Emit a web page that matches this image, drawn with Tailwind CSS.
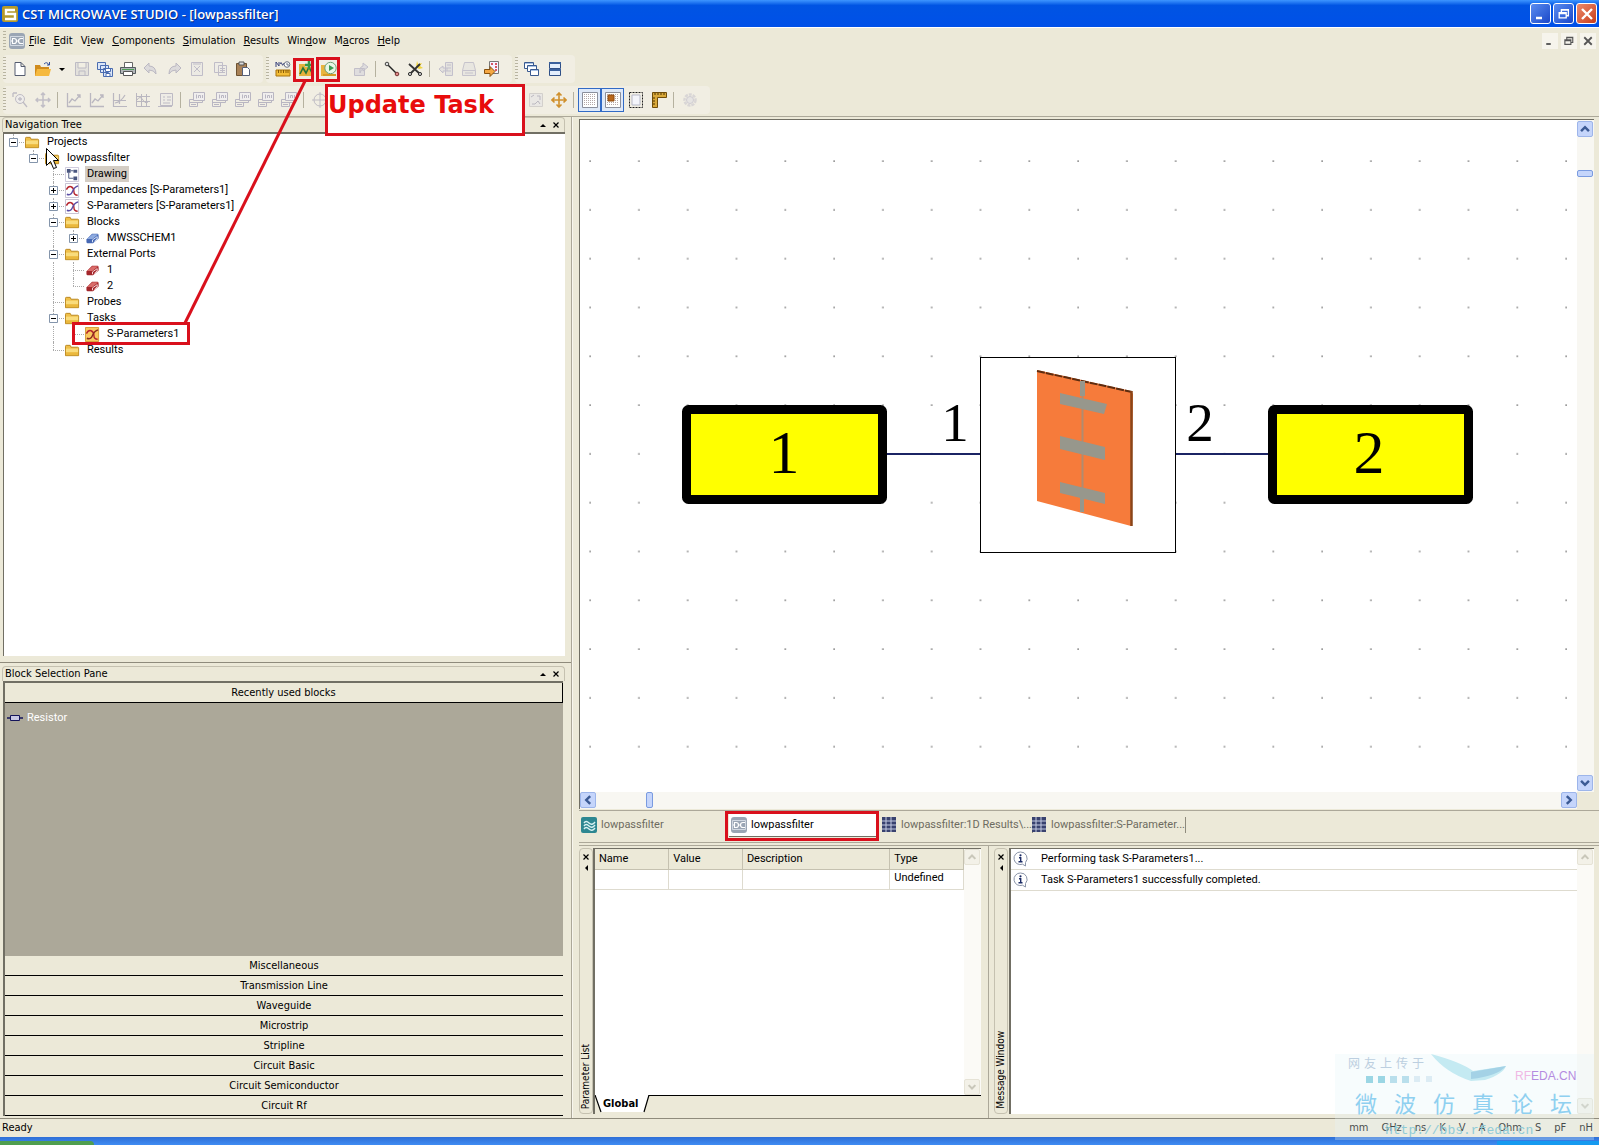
<!doctype html>
<html lang="en">

<head>
    <meta charset="UTF-8">
    <meta name="viewport" content="width=device-width, initial-scale=1.0">
    <title>CST MICROWAVE STUDIO - [lowpassfilter]</title>
    <script src="https://cdn.jsdelivr.net/npm/@tailwindcss/browser@4"></script>
</head>

<body class="bg-[#ece9d8]">
    <!-- Icon sprite -->
    <svg class="hidden" xmlns="http://www.w3.org/2000/svg">
        <symbol id="cst" viewBox="0 0 16 16"><rect width="16" height="16" rx="2" fill="#b59a2c"/><path d="M13 4H4v4h9v5H3" fill="none" stroke="#fff" stroke-width="2.4"/></symbol>
        <symbol id="ds" viewBox="0 0 16 16"><rect width="16" height="16" rx="3" fill="#9aa5b4"/><path d="M2 8h1M3.500 5.500H5q2.500 0 2.500 2.500T5 10.500H3.500zM14 5.500h-2q-2.500 0-2.500 2.500t2.500 2.500h2M7.500 8h2" fill="none" stroke="#fff" stroke-width="1.2"/><path d="M1.500 3.500h13v9h-13z" fill="none" stroke="#dfe5ee" stroke-width=".8"/></symbol>
        <symbol id="mws" viewBox="0 0 16 16"><rect width="16" height="16" rx="2" fill="#2d8791"/><path d="M3 6q2-3 5 0t6-1M3 9q2-3 5 0t6-1M3 12q2-3 5 0t6-1" fill="none" stroke="#d8f2f2" stroke-width="1.400"/></symbol>
        <symbol id="grid" viewBox="0 0 16 16"><rect x="1" width="14" height="15" fill="#39426f"/><path d="M1 4h14M1 8h14M1 12h14M5 0v15M10 0v15" stroke="#c4cae2"/></symbol>
        <symbol id="new" viewBox="0 0 16 16"><path d="M3 1.500h6l4 4v9H3zM9 1.500v4h4" fill="#fff" stroke="#555c70"/></symbol>
        <symbol id="open" viewBox="0 0 16 16"><path d="M0 4h5l1 2h8v9H0z" fill="#d08b1c"/><path d="M2 8h14l-2 7H0z" fill="#f5b93f"/><path d="M9 3q3-3 5 1M12 4h2.500V1" fill="none" stroke="#33519a"/></symbol>
        <symbol id="save" viewBox="0 0 16 16"><path d="M1.500 1.500h13v13h-13zM4 2v5h8V2M5 14v-4h6v4" fill="#e3e1dc" stroke="#bdbbc4"/></symbol>
        <symbol id="saveall" viewBox="0 0 16 16"><path d="M.5 1.500h8v7h-8zM3.500 4.500h8v7h-8zM6.500 7.500h9v8h-9z" fill="#dbe6f8" stroke="#4a6cb0"/><path d="M8.500 8v2.500h5V8M9 15v-2.500h4V15" fill="#fff" stroke="#4a6cb0"/></symbol>
        <symbol id="print" viewBox="0 0 16 16"><path d="M4.500 1.500h8v5h-8z" fill="#fff" stroke="#666"/><path d="M.5 6.500h15v6H.5z" fill="#b2b6ba" stroke="#555c60"/><path d="M3.500 10.500h9v4h-9z" fill="#fff" stroke="#555"/><path d="M2 8.500h12" stroke="#4d9e54"/></symbol>
        <symbol id="undo" viewBox="0 0 16 16"><path d="M1 7l5-5v3q7 0 7 8-2-4-7-4v3z" fill="#dcdadb" stroke="#bbb8c2"/></symbol>
        <symbol id="redo" viewBox="0 0 16 16"><path d="M15 7l-5-5v3q-7 0-7 8 2-4 7-4v3z" fill="#dcdadb" stroke="#bbb8c2"/></symbol>
        <symbol id="del" viewBox="0 0 16 16"><path d="M2.500 1.500h11v13h-11zM5 5l6 6M11 5l-6 6M4 3h8" fill="#eceae4" stroke="#c0bdc8"/></symbol>
        <symbol id="copy" viewBox="0 0 16 16"><path d="M2.500 1.500h8v10h-8zM6.500 4.500h8v10h-8zM8 7.500h5M8 9.500h5M8 11.500h5" fill="#eeece6" stroke="#c0bdc8"/></symbol>
        <symbol id="paste" viewBox="0 0 16 16"><path d="M1.500 2.500h10v12h-10z" fill="#a98258" stroke="#6d5232"/><path d="M4 1h5v3H4z" fill="#ddd" stroke="#555"/><path d="M7.500 6.500h5l2 2v6h-7z" fill="#fff" stroke="#555f78"/></symbol>
        <symbol id="units" viewBox="0 0 16 16"><path d="M1 6V1l3 4V1" fill="none" stroke="#3b447e"/><path d="M5 3q1-3 2 0t2-1" fill="none" stroke="#3b447e"/><circle cx="12" cy="3.500" r="2.800" fill="#fff" stroke="#6b7387"/><path d="M12 2v2h2" fill="none" stroke="#6b7387"/><path d="M1 9h14v6H1z" fill="#f4bd36" stroke="#a8730d"/><path d="M3.500 9v3M6 9v3M8.500 9v3M11 9v3M13 9v3" stroke="#875a05"/></symbol>
        <symbol id="task" viewBox="0 0 16 16"><path d="M1 3h6v3h7v9H1z" fill="#e6b23c"/><path d="M2 13l3-6 3 5 3-6 3 6" fill="none" stroke="#27763a" stroke-width="1.600"/><path d="M11 0v8M7 4h8" stroke="#3a9a48" stroke-width="2.500"/></symbol>
        <symbol id="play" viewBox="0 0 16 16"><path d="M0 4h7v11H0z" fill="#e9b43e"/><path d="M2 13h13v2H2z" fill="#d79a23"/><circle cx="9.500" cy="7" r="5.700" fill="#e9f6e6" stroke="#6f9f72"/><path d="M8 4l5 3-5 3z" fill="#3b9a51"/></symbol>
        <symbol id="gopen" viewBox="0 0 16 16"><path d="M1.500 7.500h10v7h-10zM7 12q-1-6 3-7V2l5 4-5 4V8q-2 0-3 4z" fill="#dfddde" stroke="#c2bfc9"/></symbol>
        <symbol id="wire" viewBox="0 0 16 16"><path d="M3 3l10 10" stroke="#222" stroke-width="1.400"/><circle cx="3" cy="3" r="1.800" fill="#ddd" stroke="#444"/><circle cx="13" cy="13" r="1.800" fill="#d88" stroke="#733"/></symbol>
        <symbol id="cut" viewBox="0 0 16 16"><path d="M10 0l1 3 4-1-2 3 3 2-4 1-3-2z" fill="#f2d43a"/><path d="M2 3l11 10M13 3L3 13" stroke="#333" stroke-width="1.800"/><circle cx="3" cy="13" r="1.600" fill="#ccc" stroke="#333"/><circle cx="13" cy="13" r="1.600" fill="#ccc" stroke="#333"/></symbol>
        <symbol id="gport" viewBox="0 0 16 16"><path d="M7.500 1.500h7v13h-7zM9 4h4M9 7h4M9 10h4M1 8l4-3v2h4v3H5v2z" fill="#e4e2de" stroke="#c3c0cc"/></symbol>
        <symbol id="gdev" viewBox="0 0 16 16"><path d="M3.500 1.500h9l2 8v5h-13v-5zM1.500 9.500h13M4 12h8" fill="#e8e6e0" stroke="#c6c3cc"/></symbol>
        <symbol id="exp" viewBox="0 0 16 16"><path d="M5.500.5h9v12h-9z" fill="#f5f2ff" stroke="#777"/><path d="M7 3h2M11 3h2M11 6h2M11 9h2" stroke="#c23" stroke-width="1.500"/><path d="M.5 8.500H6v-3l5 5-5 5v-3H.5z" fill="#f5a742" stroke="#87500e"/></symbol>
        <symbol id="casc" viewBox="0 0 16 16"><path d="M.5 1.500h9v6h-9z" fill="#fff" stroke="#3a5a90"/><path d="M3.500 4.500h9v6h-9z" fill="#fff" stroke="#3a5a90"/><path d="M6.500 8.500h8v6h-8z" fill="#fff" stroke="#3a5a90"/><path d="M1 2.500h8M4 5.500h8M7 9.500h7" stroke="#a9c2e6"/></symbol>
        <symbol id="tile" viewBox="0 0 16 16"><path d="M2.500 1.500h11v6h-11zM2.500 8.500h11v6h-11z" fill="#e3eefc" stroke="#2f4f86"/><path d="M2 2h12M2 9h12" stroke="#3a609c" stroke-width="2"/></symbol>
        <symbol id="gzoom" viewBox="0 0 16 16"><circle cx="8" cy="7" r="4.500" fill="#eeecea" stroke="#bfbcc4"/><path d="M11 10l4 5M8 5v4M6 7h4M1 1v4M1 1h4" stroke="#bfbcc4" stroke-width="1.300"/></symbol>
        <symbol id="gpan" viewBox="0 0 16 16"><path d="M8 1v14M1 8h14M6 3l2-2 2 2M6 13l2 2 2-2M3 6L1 8l2 2M13 6l2 2-2 2" fill="none" stroke="#c1bec6" stroke-width="1.500"/></symbol>
        <symbol id="pan" viewBox="0 0 16 16"><path d="M8 1v14M1 8h14M5.500 3.500L8 1l2.500 2.500M5.500 12.500L8 15l2.500-2.500M3.500 5.500L1 8l2.500 2.500M12.500 5.500L15 8l-2.500 2.500" fill="none" stroke="#d0902c" stroke-width="1.600"/></symbol>
        <symbol id="gchart" viewBox="0 0 16 16"><path d="M1.500 1v13.500H15M3 11l3-4 3 2 5-6M11 3h3v3" fill="none" stroke="#bab7c0" stroke-width="1.300"/></symbol>
        <symbol id="gcross" viewBox="0 0 16 16"><path d="M1.500 1v13.500H15M7.500 2v10M2 8.500h12M3 11q6-1 10-8" fill="none" stroke="#bab7c0" stroke-width="1.200"/></symbol>
        <symbol id="ggrid" viewBox="0 0 16 16"><path d="M1.500 1v13.500H15M6.500 2v12M11.500 2v12M2 4.500h13M2 9.500h13M2 8q3-5 6 0t6 1" fill="none" stroke="#bab7c0"/></symbol>
        <symbol id="gtable" viewBox="0 0 16 16"><path d="M2.500 1.500h12v12h-12zM0 14.500h14M5 5h2M9 5h4M5 8h2M9 8h4M5 11h7" fill="#eeece6" stroke="#bdbac4"/></symbol>
        <symbol id="gstack" viewBox="0 0 16 16"><path d="M4.500.5h11v8h-11z" fill="#f0eeee" stroke="#b9b6c2"/><path d="M7.500 2.500v4M9.500 6V3.500h2V6M13.500 3v3M.5 7.500H4M.5 7.500v7h8v-4M1 10.500h12.500v-2M2 12.500h5" fill="none" stroke="#b9b6c2"/></symbol>
        <symbol id="gaim" viewBox="0 0 16 16"><circle cx="8" cy="8" r="6" fill="none" stroke="#bfbcc4"/><path d="M8 0v16M0 8h16" stroke="#bfbcc4"/></symbol>
        <symbol id="gpic" viewBox="0 0 16 16"><path d="M1.500 1.500h13v13h-13z" fill="#e9e7e4" stroke="#d3d0cc"/><path d="M3 5l3-2M9 4h3v4M4 12h3l3-3 2 3" fill="none" stroke="#bbb8c0"/></symbol>
        <symbol id="dots" viewBox="0 0 16 16"><path d="M.5.5h15v15H.5z" fill="#fff" stroke="#8b8f9c"/><path d="M2 2.500h12M2 4.500h12M2 6.500h12M2 8.500h12M2 10.500h12M2 12.500h12" stroke="#b5a8a8" stroke-dasharray="1 1"/></symbol>
        <symbol id="dotsel" viewBox="0 0 16 16"><use href="#dots"/><path d="M3 3h6v6H3z" fill="#b8671c" stroke="#8f4d10"/></symbol>
        <symbol id="frame" viewBox="0 0 16 16"><path d="M1.500.5h13v15h-13z" fill="none" stroke="#222" stroke-dasharray="2 1"/><path d="M4 3h8v10H4z" fill="#f4f5fb" stroke="#b7b9c8"/></symbol>
        <symbol id="ruler" viewBox="0 0 16 16"><path d="M1.500.5h14v5h-9v10h-5z" fill="#d9a93a" stroke="#6f4d0a"/><path d="M4 1v2M7 1v2M10 1v2M13 1v2M2 6h2M2 9h2M2 12h2" stroke="#4c3300"/></symbol>
        <symbol id="gcog" viewBox="0 0 16 16"><circle cx="8" cy="8" r="5.500" fill="none" stroke="#d9d6d6" stroke-width="2.500" stroke-dasharray="3 1"/><circle cx="8" cy="8" r="3.500" fill="#e6e4e2" stroke="#cfccd2"/></symbol>
        <symbol id="folder" viewBox="0 0 16 16"><path d="M.5 3.500q0-1 1-1h4l1 2h7q1 0 1 1v8H.5z" fill="#f0c04a" stroke="#b9851c"/><path d="M1 6h13v4H1z" fill="#f9dc7c"/><path d="M1 10h13v3H1z" fill="#eab83d"/></symbol>
        <symbol id="drawing" viewBox="0 0 16 16"><path d="M.5.5h14v15H.5z" fill="#fff" stroke="#cbc6da"/><path d="M2 2h4v4H2zM9 3h4v3H9zM9 10h4v4H9z" fill="#4a5680"/><path d="M6 4h3M4 6v6h5" fill="none" stroke="#4a5680"/></symbol>
        <symbol id="curve" viewBox="0 0 16 16"><path d="M.5.5h14v15H.5z" fill="#fff" stroke="#c3bed0"/><path d="M1.500 7q2-4 5-3t3 5 4 4" fill="none" stroke="#b6262e" stroke-width="1.500"/><path d="M2 12q4 2 6-3t6-6" fill="none" stroke="#5a4da6" stroke-width="1.500"/></symbol>
        <symbol id="curvetask" viewBox="0 0 16 16"><path d="M.5.5h14v15H.5z" fill="#f9c860" stroke="#d39a34"/><path d="M1.500 7q2-4 5-3t3 5 4 4" fill="none" stroke="#b6262e" stroke-width="1.500"/><path d="M2 12q4 2 6-3t6-6" fill="none" stroke="#8a2a20" stroke-width="1.500"/></symbol>
        <symbol id="blue" viewBox="0 0 16 16"><path d="M1.500 9l6-6h6q1 0 1 2v3l-6 5h-6q-1 0-1-2z" fill="#4668b4"/><path d="M2 8.500L8 3.500h6l-6 5z" fill="#8eabe0"/><path d="M8 12V9.500l5-3.500v2.500L10 11" fill="none" stroke="#dde7fa"/></symbol>
        <symbol id="red" viewBox="0 0 16 16"><path d="M1.500 9l6-6h6q1 0 1 2v3l-6 5h-6q-1 0-1-2z" fill="#a3262b"/><path d="M2 8.500L8 3.500h6l-6 5z" fill="#d96c6a"/><path d="M8 12V9.500l5-3.500v2.500L10 11" fill="none" stroke="#fbdcdc"/></symbol>
        <symbol id="info" viewBox="0 0 16 16"><path d="M7.500 1a6.300 6.300 0 0 1 5 10.500V15l-3-1.800A6.300 6.300 0 1 1 7.500 1z" fill="#fff" stroke="#8a94a8"/><circle cx="7.500" cy="4.300" r="1.100" fill="#1c2c66"/><path d="M6 6.700h1.700v4M5.500 10.700h4" fill="none" stroke="#1c2c66" stroke-width="1.400"/></symbol>
        <symbol id="min" viewBox="0 0 16 16"><path d="M3 12h6" stroke="currentColor" stroke-width="2.500"/></symbol>
        <symbol id="restore" viewBox="0 0 16 16"><path d="M5 6V3h8v7h-2M2.500 6.500h8v6h-8zM2 7.500h9M5 3.500h8" fill="none" stroke="currentColor" stroke-width="1.500"/></symbol>
        <symbol id="x" viewBox="0 0 16 16"><path d="M3 3l10 10M13 3L3 13" stroke="currentColor" stroke-width="2.400"/></symbol>
        <symbol id="up" viewBox="0 0 16 16"><path d="M3.500 10.500L8 6l4.500 4.500" fill="none" stroke="currentColor" stroke-width="2.800"/></symbol>
        <symbol id="down" viewBox="0 0 16 16"><path d="M3.500 5.500L8 10l4.500-4.500" fill="none" stroke="currentColor" stroke-width="2.800"/></symbol>
        <symbol id="left" viewBox="0 0 16 16"><path d="M10.500 3.500L6 8l4.500 4.500" fill="none" stroke="currentColor" stroke-width="2.800"/></symbol>
        <symbol id="right" viewBox="0 0 16 16"><path d="M5.500 3.500L10 8l-4.500 4.500" fill="none" stroke="currentColor" stroke-width="2.800"/></symbol>
        <symbol id="resistor" viewBox="0 0 16 16"><path d="M0 8h16" stroke="#14145a" stroke-width="1.500"/><path d="M3.500 5.500h9v5h-9z" fill="#c8c8e4" stroke="#14145a"/></symbol>
    </svg>

    <div class="relative flex h-screen w-full flex-col overflow-hidden font-['DejaVu_Sans_Condensed','DejaVu_Sans',sans-serif] text-[11px] leading-4 text-black">

        <!-- Title bar -->
        <header class="flex h-[27px] shrink-0 items-center bg-linear-to-b from-[#3d95ff] via-[#0054e3] via-20% to-[#0050e8] px-0.5">
            <svg class="size-4"><use href="#cst"/></svg>
            <h1 class="ml-1 font-['Open_Sans',sans-serif] text-[13px] font-semibold text-white [text-shadow:1px_1px_0_#0a2a80]">CST MICROWAVE STUDIO - [lowpassfilter]</h1>
            <div class="ml-auto flex gap-0.5 text-white">
                <button aria-label="Minimize" class="flex size-[21px] items-center justify-center rounded-[3px] border border-white bg-linear-to-br from-[#5b8cf0] to-[#1c46c8]"><svg class="size-4"><use href="#min"/></svg></button>
                <button aria-label="Restore" class="flex size-[21px] items-center justify-center rounded-[3px] border border-white bg-linear-to-br from-[#5b8cf0] to-[#1c46c8]"><svg class="size-[14px]"><use href="#restore"/></svg></button>
                <button aria-label="Close" class="flex size-[21px] items-center justify-center rounded-[3px] border border-white bg-linear-to-br from-[#ec8a6c] to-[#c83a14]"><svg class="size-4"><use href="#x"/></svg></button>
            </div>
        </header>

        <!-- Menu -->
        <nav class="flex h-[27px] shrink-0 items-center border-t border-white pl-[3px]">
            <span class="h-5 w-[3px] bg-[repeating-linear-gradient(#b8b4a0_0_1px,transparent_1px_3px)]"></span>
            <svg class="mr-1 ml-[3px] size-4"><use href="#ds"/></svg>
            <div class="flex gap-2">
                <button><u>F</u>ile</button>
                <button><u>E</u>dit</button>
                <button>V<u>i</u>ew</button>
                <button><u>C</u>omponents</button>
                <button><u>S</u>imulation</button>
                <button><u>R</u>esults</button>
                <button>Win<u>d</u>ow</button>
                <button>M<u>a</u>cros</button>
                <button><u>H</u>elp</button>
            </div>
            <div class="mr-[3px] ml-auto flex gap-[3px] text-[#555]">
                <button aria-label="Minimize document" class="flex size-4 items-center justify-center bg-[#f6f4ec]"><svg class="size-3"><use href="#min"/></svg></button>
                <button aria-label="Restore document" class="flex size-4 items-center justify-center bg-[#f6f4ec]"><svg class="size-3"><use href="#restore"/></svg></button>
                <button aria-label="Close document" class="flex size-4 items-center justify-center bg-[#f6f4ec]"><svg class="size-3"><use href="#x"/></svg></button>
            </div>
        </nav>

        <!-- Toolbars, filled by the script -->
        <div class="flex h-[30px] shrink-0 items-center gap-[3px] pl-[3px]" id="toolbar-main"></div>
        <div class="mb-px flex h-[31px] shrink-0 items-center pl-[3px]" id="toolbar-view"></div>

        <div class="flex min-h-0 flex-1 border-t border-[#aca899]">
            <!-- Left docks -->
            <aside class="flex w-[572px] shrink-0 flex-col border-r border-[#aca899]">
                <section class="flex min-h-0 flex-1 flex-col border-b border-[#8f8b7c] pr-[6px] pb-[6px] pl-[2px]">
                    <div class="flex h-[15px] shrink-0 items-center rounded-t-sm border border-b-0 border-[#c5c1b0] pr-1 pl-[2px]">
                        <h2>Navigation Tree</h2>
                        <button aria-label="Collapse tree" class="ml-auto border-x-[3px] border-b-[3px] border-x-transparent border-b-black"></button>
                        <button aria-label="Close tree" class="ml-1.5"><svg class="size-2"><use href="#x"/></svg></button>
                    </div>
                    <ul id="tree" class="ml-px min-h-0 flex-1 border-t-2 border-l border-[#716f64] bg-white font-[Roboto,sans-serif]"></ul>
                </section>
                <section class="flex h-[455px] shrink-0 flex-col pt-[3px] pr-[6px] pb-0.5 pl-[2px]">
                    <div class="flex h-[15px] shrink-0 items-center rounded-t-sm border border-b-0 border-[#c5c1b0] pr-1 pl-[2px]">
                        <h2>Block Selection Pane</h2>
                        <button aria-label="Collapse pane" class="ml-auto border-x-[3px] border-b-[3px] border-x-transparent border-b-black"></button>
                        <button aria-label="Close pane" class="ml-1.5"><svg class="size-2"><use href="#x"/></svg></button>
                    </div>
                    <div class="mr-0.5 ml-px flex min-h-0 flex-1 flex-col border-t-2 border-l-2 border-[#716f64] bg-[#aca899]">
                        <button class="h-5 shrink-0 border-r border-b border-black bg-[#ece9d8]">Recently used blocks</button>
                        <div class="flex flex-1 items-start gap-1 pt-[7px] pl-0.5 font-[Roboto,sans-serif] text-white">
                            <svg class="size-4"><use href="#resistor"/></svg><span>Resistor</span>
                        </div>
                        <button class="h-5 shrink-0 border-b border-black bg-[#ece9d8]">Miscellaneous</button>
                        <button class="h-5 shrink-0 border-b border-black bg-[#ece9d8]">Transmission Line</button>
                        <button class="h-5 shrink-0 border-b border-black bg-[#ece9d8]">Waveguide</button>
                        <button class="h-5 shrink-0 border-b border-black bg-[#ece9d8]">Microstrip</button>
                        <button class="h-5 shrink-0 border-b border-black bg-[#ece9d8]">Stripline</button>
                        <button class="h-5 shrink-0 border-b border-black bg-[#ece9d8]">Circuit Basic</button>
                        <button class="h-5 shrink-0 border-b border-black bg-[#ece9d8]">Circuit Semiconductor</button>
                        <button class="h-5 shrink-0 border-b border-black bg-[#ece9d8]">Circuit Rf</button>
                    </div>
                </section>
            </aside>

            <main class="flex min-w-0 flex-1 flex-col border-l border-[#f8f6ee] pl-1.5">
                <!-- Schematic -->
                <div class="mt-0.5 mr-[5px] grid min-h-0 flex-1 grid-cols-[1fr_17px] grid-rows-[1fr_17px] border-t border-l border-[#716f64] bg-white">
                    <div class="overflow-hidden">
                        <svg width="997" height="672" viewBox="580 120 997 672" font-family="'Liberation Serif',serif" text-anchor="middle">
                            <defs>
                                <pattern id="snap" x="589" y="160" width="48.800" height="48.800" patternUnits="userSpaceOnUse"><rect x="0.500" y="0.500" width="1.200" height="1.200" fill="#333"/></pattern>
                            </defs>
                            <rect x="580" y="140" width="997" height="620" fill="url(#snap)"/>
                            <path d="M886 454H981M1175 454h93" stroke="#1b2464" stroke-width="2"/>
                            <rect x="686.500" y="409.500" width="196" height="90" rx="2" fill="#ff0" stroke="#000" stroke-width="9" stroke-linejoin="round"/>
                            <rect x="1272.500" y="409.500" width="196" height="90" rx="2" fill="#ff0" stroke="#000" stroke-width="9" stroke-linejoin="round"/>
                            <rect x="980.500" y="357.500" width="195" height="195" fill="#fff" stroke="#000"/>
                            <path d="M1037 370l94 21 2 3-2 132-94-25z" fill="#f67b3b"/>
                            <path d="M1037 371l95 21" stroke="#5d2c10" stroke-width="2" stroke-dasharray="8 1"/>
                            <path d="M1131.500 391v135" stroke="#8a4519" stroke-width="2.500"/>
                            <path d="M1082.500 381v131" stroke="#b08c70" stroke-width="2"/>
                            <path d="M1080 381h5v15h-5zM1080 495h4v17h-4zM1060 393l47 11-3 10-44-10zM1060 436l45 11v13l-45-11zM1060 482l45 11v11l-45-11z" fill="#97978c"/>
                            <text x="784" y="473" font-size="62">1</text>
                            <text x="1369" y="473" font-size="62">2</text>
                            <text x="955" y="441" font-size="55">1</text>
                            <text x="1200" y="441" font-size="55">2</text>
                        </svg>
                    </div>
                    <div class="flex flex-col bg-[#f8f7f2] py-px text-[#3b5a94]">
                        <button aria-label="Scroll up" class="size-4 rounded-xs border border-[#9db5ea] bg-[#c5d5fb]"><svg class="size-3.5"><use href="#up"/></svg></button>
                        <div class="mt-[33px] h-[7px] w-4 rounded-xs border border-[#7a9be0] bg-[#c5d5fb]"></div>
                        <button aria-label="Scroll down" class="mt-auto size-4 rounded-xs border border-[#9db5ea] bg-[#c5d5fb]"><svg class="size-3.5"><use href="#down"/></svg></button>
                    </div>
                    <div class="flex bg-[#f8f7f2] text-[#3b5a94]">
                        <button aria-label="Scroll left" class="size-4 rounded-xs border border-[#9db5ea] bg-[#c5d5fb]"><svg class="size-3.5"><use href="#left"/></svg></button>
                        <div class="ml-[50px] h-4 w-[7px] rounded-xs border border-[#7a9be0] bg-[#c5d5fb]"></div>
                        <button aria-label="Scroll right" class="ml-auto size-4 rounded-xs border border-[#9db5ea] bg-[#c5d5fb]"><svg class="size-3.5"><use href="#right"/></svg></button>
                    </div>
                    <div class="bg-[#ece9d8]"></div>
                </div>

                <!-- Document tabs -->
                <div class="mt-px flex h-[33px] shrink-0 items-start border-y border-[#aca899] pt-0.5 font-[Roboto,sans-serif] text-[#6d6b60]">
                    <div class="flex h-6 w-[150px] items-center gap-1 pl-0.5"><svg class="size-4"><use href="#mws"/></svg><a href="#">lowpassfilter</a></div>
                    <div class="flex h-6 w-[150px] items-center gap-1 border-b border-[#716f64] bg-white pl-0.5 text-black"><svg class="size-4"><use href="#ds"/></svg><a href="#">lowpassfilter</a></div>
                    <div class="flex h-6 w-[150px] items-center gap-1 pr-1 pl-0.5"><svg class="size-4 shrink-0"><use href="#grid"/></svg><a href="#" class="flex-1 border-r border-[#8f8b7c] whitespace-nowrap">lowpassfilter:1D Results\...</a></div>
                    <div class="flex h-6 w-[150px] items-center gap-1 pr-1 pl-0.5"><svg class="size-4 shrink-0"><use href="#grid"/></svg><a href="#" class="flex-1 border-r border-[#8f8b7c] whitespace-nowrap">lowpassfilter:S-Parameter...</a></div>
                </div>

                <div class="mt-0.5 grid h-[273px] shrink-0 grid-cols-[410px_1fr] border-t border-[#aca899] font-[Roboto,sans-serif]">
                    <!-- Parameter list -->
                    <section class="flex border-r border-[#aca899] pt-0.5 pr-[7px] pb-[4px]">
                        <div class="flex w-[14px] flex-col items-center rounded-sm border border-[#c5c1b0] pt-1 pb-1">
                            <button aria-label="Close parameter list"><svg class="size-2"><use href="#x"/></svg></button>
                            <button aria-label="Collapse parameter list" class="mt-1 border-y-[3px] border-r-[3px] border-y-transparent border-r-black"></button>
                            <h2 class="mt-auto rotate-180 font-['DejaVu_Sans_Condensed',sans-serif] text-[10px] leading-3 [writing-mode:vertical-rl]">Parameter List</h2>
                        </div>
                        <div class="flex min-w-0 flex-1 flex-col border-t border-l-2 border-[#716f64]">
                            <div class="flex flex-1 bg-white">
                                <table class="w-full table-fixed self-start text-left">
                                    <thead>
                                        <tr class="h-5 bg-[#ece9d8]">
                                            <th class="w-1/5 border-r border-b border-[#c5c1b0] pl-1 font-normal">Name</th>
                                            <th class="w-1/5 border-r border-b border-[#c5c1b0] pl-1 font-normal">Value</th>
                                            <th class="w-2/5 border-r border-b border-[#c5c1b0] pl-1 font-normal">Description</th>
                                            <th class="w-1/5 border-r border-b border-[#c5c1b0] pl-1 font-normal">Type</th>
                                        </tr>
                                    </thead>
                                    <tbody>
                                        <tr class="h-5 align-top">
                                            <td class="border-r border-b border-[#dedbcf]"></td>
                                            <td class="border-r border-b border-[#dedbcf]"></td>
                                            <td class="border-r border-b border-[#dedbcf]"></td>
                                            <td class="border-r border-b border-[#dedbcf] pl-1">Undefined</td>
                                        </tr>
                                    </tbody>
                                </table>
                                <div class="flex w-[17px] shrink-0 flex-col justify-between bg-[#fbfaf6] text-[#c9c7ba]">
                                    <button aria-label="Scroll up" class="flex size-4 items-center justify-center rounded-xs border border-[#e6e3d6] bg-[#f3f1e8]"><svg class="size-3"><use href="#up"/></svg></button>
                                    <button aria-label="Scroll down" class="flex size-4 items-center justify-center rounded-xs border border-[#e6e3d6] bg-[#f3f1e8]"><svg class="size-3"><use href="#down"/></svg></button>
                                </div>
                            </div>
                            <div class="relative flex h-[19px] shrink-0 items-start border-t border-black">
                                <svg class="absolute -top-px left-0 h-[18px] w-[55px]" viewBox="0 0 55 18"><path d="M0 0l6 17h43l5-17" fill="#fff"/><path d="M0 0l6 17M49 17l5-17" fill="none" stroke="#000" stroke-width="1.200"/></svg>
                                <a href="#" class="relative pl-2 font-['DejaVu_Sans_Condensed',sans-serif] font-bold">Global</a>
                            </div>
                        </div>
                    </section>

                    <!-- Messages -->
                    <section class="flex pt-0.5 pr-[5px] pb-[4px] pl-[5px]">
                        <div class="flex w-[14px] flex-col items-center rounded-sm border border-[#c5c1b0] pt-1 pb-1">
                            <button aria-label="Close message window"><svg class="size-2"><use href="#x"/></svg></button>
                            <button aria-label="Collapse message window" class="mt-1 border-y-[3px] border-r-[3px] border-y-transparent border-r-black"></button>
                            <h2 class="mt-auto rotate-180 font-['DejaVu_Sans_Condensed',sans-serif] text-[10px] leading-3 [writing-mode:vertical-rl]">Message Window</h2>
                        </div>
                        <div class="ml-px flex min-w-0 flex-1 border-t border-l-2 border-[#716f64] bg-white">
                            <ul class="flex-1">
                                <li class="flex h-[21px] items-center gap-3 border-b border-[#dedbcf] pl-0.5"><svg class="size-4"><use href="#info"/></svg>Performing task S-Parameters1...</li>
                                <li class="flex h-[21px] items-center gap-3 border-b border-[#dedbcf] pl-0.5"><svg class="size-4"><use href="#info"/></svg>Task S-Parameters1 successfully completed.</li>
                            </ul>
                            <div class="flex w-[17px] flex-col justify-between bg-[#fbfaf6] text-[#c9c7ba]">
                                <button aria-label="Scroll up" class="flex size-4 items-center justify-center rounded-xs border border-[#e6e3d6] bg-[#f3f1e8]"><svg class="size-3"><use href="#up"/></svg></button>
                                <button aria-label="Scroll down" class="flex size-4 items-center justify-center rounded-xs border border-[#e6e3d6] bg-[#f3f1e8]"><svg class="size-3"><use href="#down"/></svg></button>
                            </div>
                        </div>
                    </section>
                </div>
            </main>
        </div>

        <!-- Status bar -->
        <footer class="flex h-[19px] shrink-0 items-center border-t border-[#8f8b7c] px-0.5">
            <span>Ready</span>
            <div class="mr-1 ml-auto flex gap-[13px]">
                <span>mm</span><span>GHz</span><span>ns</span><span>K</span><span>V</span><span>A</span><span>Ohm</span><span>S</span><span>pF</span><span>nH</span>
            </div>
        </footer>
        <div class="flex h-2 shrink-0 items-end bg-linear-to-b from-[#2f6fd6] to-[#3f8cf3]">
            <div class="h-1 w-[94px] rounded-tr-md bg-[#4f9e4f]"></div>
            <div class="ml-auto h-1 w-[102px] bg-[#169af0]"></div>
        </div>

        <!-- Forum watermark -->
        <div class="pointer-events-none absolute right-[5px] bottom-[5px] h-[86px] w-[259px] overflow-hidden bg-[#e4f4fa]/30">
            <svg class="h-full w-full" viewBox="0 0 259 86" font-family="'Noto Sans CJK SC',sans-serif">
                <text x="13" y="14" font-size="12" fill="#bccfe0" letter-spacing="4">网友上传于</text>
                <path d="M31 22h7v7h-7zM43 22h7v7h-7z" fill="#9bd6e4"/>
                <path d="M55 22h7v7h-7zM67 22h7v7h-7z" fill="#b9dfec"/>
                <path d="M79 22h6v6h-6zM91 22h6v6h-6z" fill="#dcecf4"/>
                <path d="M96 0q30 8 42 17l33-5q-3 8-21 14l-14 1q-25-8-40-27z" fill="#c4eaf2"/>
                <path d="M136 18l35-6q-8 10-35 13z" fill="#a4d2e6"/>
                <text x="180" y="26" font-size="12" fill="#b58be0" font-family="'Liberation Sans',sans-serif"><tspan fill="#f0b8e4">RF</tspan>EDA.CN</text>
                <text x="20" y="58" font-size="22" fill="#8fd0f0" letter-spacing="17">微波仿真论坛</text>
                <text x="50" y="80" font-size="13" fill="#8fcbd6" font-family="'Liberation Mono',monospace">http://bbs.rfeda.cn</text>
            </svg>
        </div>

        <!-- Red annotations -->
        <svg class="pointer-events-none absolute top-0 left-0 h-[350px] w-[350px]" viewBox="0 0 350 350">
            <path d="M305 81L185 323" stroke="#d9101c" stroke-width="3"/>
            <path d="M294.500 59.500h18v21h-18zM317.500 58.500h21v22h-21zM73.500 323.500h115v20h-115z" fill="none" stroke="#d9101c" stroke-width="3"/>
            <path d="M46.500 148.500v17l4-4 3 7 3-1-3-7h5z" fill="#fff" stroke="#000"/>
        </svg>
        <div class="absolute top-[84px] left-[325px] h-[52px] w-[200px] border-[3px] border-[#d9101c] bg-white font-['DejaVu_Sans',sans-serif] text-[24px] leading-9 font-bold whitespace-nowrap text-[#e80c0c]">Update Task</div>
        <div class="pointer-events-none absolute top-[811px] left-[725px] h-[30px] w-[154px] border-[3px] border-[#d9101c]"></div>
    </div>

    <script>
        const mainBars = [
            ["new", "open", "v", "save", "saveall", "print", "undo", "redo", "del", "copy", "paste"],
            ["units", "task", "play", " ", "gopen", "|", "wire", "cut", "|", "gport", "gdev", "exp"],
            ["casc", "tile"]
        ]
        const viewBar = ["gzoom", "gpan", "|", "gchart", "gchart", "gcross", "ggrid", "gtable", "|",
            "gstack", "gstack", "gstack", "gstack", "gstack", "|", "gaim", "gaim", "gchart", "gchart",
            "gpic", "gpic", "gtable", "gtable", "gpic", " ", "gpic", "pan", "|", "dots", "dotsel", "frame", "ruler", "|", "gcog"]
        const pressed = ["dots", "dotsel"]

        function item(name) {
            if (name === "|") return `<span class="my-1 mr-1 ml-[3px] w-px bg-[#b5b19f]"></span>`
            if (name === " ") return `<span class="w-[9px]"></span>`
            if (name === "v") return `<button aria-label="Recent files" class="flex w-4 items-center justify-center"><span class="border-x-[3px] border-t-[3px] border-x-transparent border-t-black"></span></button>`
            const look = pressed.includes(name) ? "border border-[#316ac5] bg-[#dfe9f8]" : ""
            return `<button aria-label="${name}" class="flex h-6 w-[23px] items-center justify-center ${look}"><svg class="size-4"><use href="#${name}"/></svg></button>`
        }

        function bar(items) {
            return `<div class="flex h-7 items-center rounded-sm bg-[#f1eee3] pr-[9px]">
                <span class="mr-0.5 h-6 w-[3px] bg-[repeating-linear-gradient(#b8b4a0_0_1px,transparent_1px_3px)]"></span>
                <div class="flex h-6">${items.map(item).join("")}</div></div>`
        }

        document.querySelector("#toolbar-main").innerHTML = mainBars.map(bar).join("")
        document.querySelector("#toolbar-view").innerHTML = bar(viewBar)

        // guides: one letter per 20px column. "|" line, "." empty, "+"/"-" toggle, "t" branch, "l" last branch
        const rows = [
            ["-", "folder", "Projects"],
            [".-", "folder", "lowpassfilter"],
            ["..t", "drawing", "Drawing"],
            ["..+", "curve", "Impedances [S-Parameters1]"],
            ["..+", "curve", "S-Parameters [S-Parameters1]"],
            ["..-", "folder", "Blocks"],
            ["..|+", "blue", "MWSSCHEM1"],
            ["..-", "folder", "External Ports"],
            ["..|t", "red", "1"],
            ["..|l", "red", "2"],
            ["..t", "folder", "Probes"],
            ["..-", "folder", "Tasks"],
            ["..|l", "curvetask", "S-Parameters1"],
            ["..l", "folder", "Results"]
        ]

        function guide(c) {
            const v = `<i class="absolute top-0 left-[9px] h-full border-l border-dotted border-[#aaa]"></i>`
            const half = `<i class="absolute top-0 left-[9px] h-1/2 border-l border-dotted border-[#aaa]"></i>`
            const h = `<i class="absolute top-2 left-[9px] w-[11px] border-t border-dotted border-[#aaa]"></i>`
            let inner = ""
            if (c === "|") inner = v
            if (c === "t") inner = v + h
            if (c === "l") inner = half + h
            if (c === "+" || c === "-") {
                inner = half + h + `<svg class="absolute top-1 left-[5px] size-[9px]" viewBox="0 0 9 9"><path d="M.5.5h8v8h-8z" fill="#fff" stroke="#8495ab"/><path d="${c === "+" ? "M2 4.500h5M4.500 2v5" : "M2 4.500h5"}" stroke="#000"/></svg>`
            }
            return `<span class="relative h-4 w-5">${inner}</span>`
        }

        document.querySelector("#tree").innerHTML = rows.map(([guides, icon, label]) => `
            <li class="flex h-4 items-center">${[...guides].map(guide).join("")}
                <svg class="ml-px size-[15px]"><use href="#${icon}"/></svg>
                <span class="ml-[5px] px-0.5 ${label === "Drawing" ? "bg-[#d4cdc4]" : ""}">${label}</span>
            </li>`).join("")
    </script>
</body>

</html>
